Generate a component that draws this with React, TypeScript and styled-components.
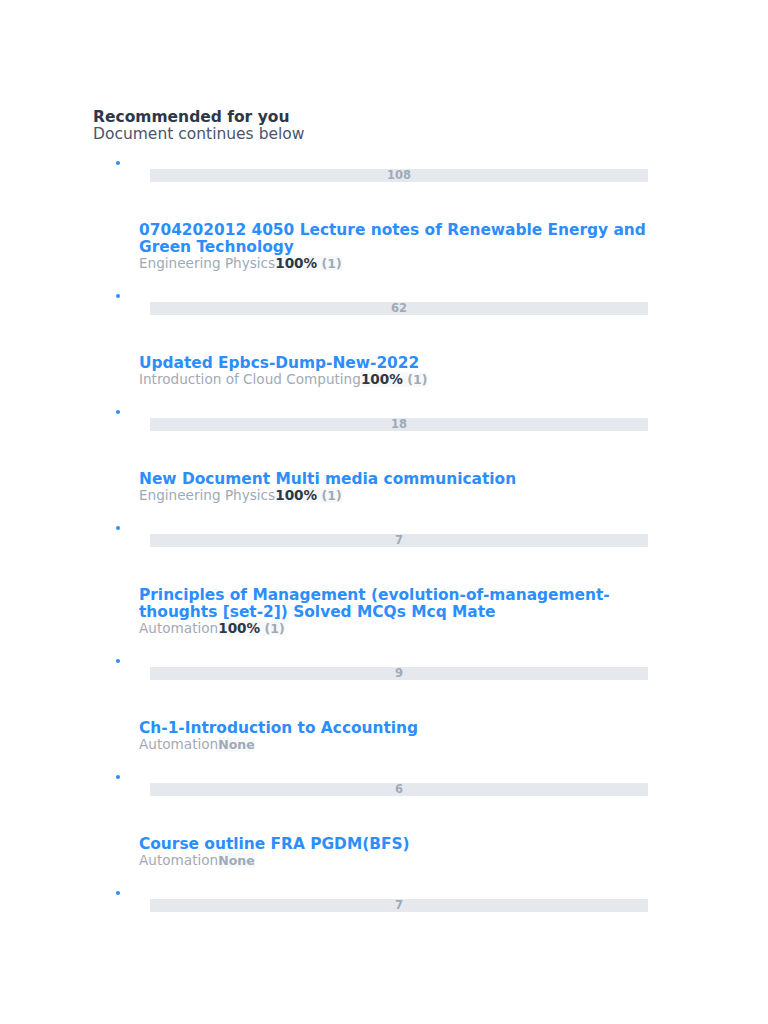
import styled, { createGlobalStyle } from 'styled-components'

const Global = createGlobalStyle`
  body {
    margin: 0;
    background: #fff;
    font-family: "DejaVu Sans", Verdana, sans-serif;
  }
`

type Doc = {
  pages: number
  title: string
  course: string
  rating?: string
  votes?: string
}

const docs: Doc[] = [
  { pages: 108, title: '0704202012 4050 Lecture notes of Renewable Energy and Green Technology', course: 'Engineering Physics', rating: '100%', votes: '(1)' },
  { pages: 62, title: 'Updated Epbcs-Dump-New-2022', course: 'Introduction of Cloud Computing', rating: '100%', votes: '(1)' },
  { pages: 18, title: 'New Document Multi media communication', course: 'Engineering Physics', rating: '100%', votes: '(1)' },
  { pages: 7, title: 'Principles of Management (evolution-of-management-thoughts [set-2]) Solved MCQs Mcq Mate', course: 'Automation', rating: '100%', votes: '(1)' },
  { pages: 9, title: 'Ch-1-Introduction to Accounting', course: 'Automation' },
  { pages: 6, title: 'Course outline FRA PGDM(BFS)', course: 'Automation' },
]

export default function App() {
  return (
    <>
      <Global />
      <Section>
        <Heading>Recommended for you</Heading>
        <Sub>Document continues below</Sub>
        <List>
          {docs.map((d, i) => (
            <Item key={i}>
              <Dot />
              <Thumb>{d.pages}</Thumb>
              <Title href="#">{d.title}</Title>
              <Meta>
                {d.course}
                <Rating>
                  {d.rating ? (
                    <>
                      <Percent>{d.rating}</Percent> {d.votes}
                    </>
                  ) : (
                    'None'
                  )}
                </Rating>
              </Meta>
            </Item>
          ))}
          <Item>
            <Dot />
            <Thumb>7</Thumb>
          </Item>
        </List>
      </Section>
    </>
  )
}

const Section = styled.div`
  padding: 109px 0 0 93px;
  width: 555px;
`

const Heading = styled.h2`
  margin: 0;
  font-size: 15.5px;
  line-height: 17px;
  font-weight: bold;
  color: #2d3748;
`

const Sub = styled.p`
  margin: 0;
  font-size: 15.5px;
  line-height: 17px;
  color: #4a5568;
`

const List = styled.ul`
  list-style: none;
  margin: 0;
  padding: 18px 0 0 0;
`

const Item = styled.li`
  margin-bottom: 23px;
`

const Dot = styled.div`
  width: 4px;
  height: 4px;
  border-radius: 50%;
  background: #2b8efc;
  margin-left: 23px;
`

const Thumb = styled.div`
  margin: 4px 0 0 57px;
  width: 498px;
  height: 13px;
  background: #e5e9ee;
  color: #a0aab7;
  font-size: 11.5px;
  font-weight: bold;
  line-height: 13px;
  text-align: center;
`

const Title = styled.a`
  display: block;
  margin: 40px 0 0 46px;
  font-size: 15.4px;
  line-height: 17px;
  font-weight: bold;
  color: #2b8efc;
  text-decoration: none;
`

const Meta = styled.div`
  margin-left: 46px;
  height: 15px;
  font-size: 13.6px;
  line-height: 15px;
  color: #a0aab7;
`

const Rating = styled.span`
  background: #f7f8fa;
  color: #a0aab7;
  font-size: 12.5px;
  line-height: 1;
  font-weight: bold;
`

const Percent = styled.span`
  color: #2d3748;
  font-size: 13.6px;
`
